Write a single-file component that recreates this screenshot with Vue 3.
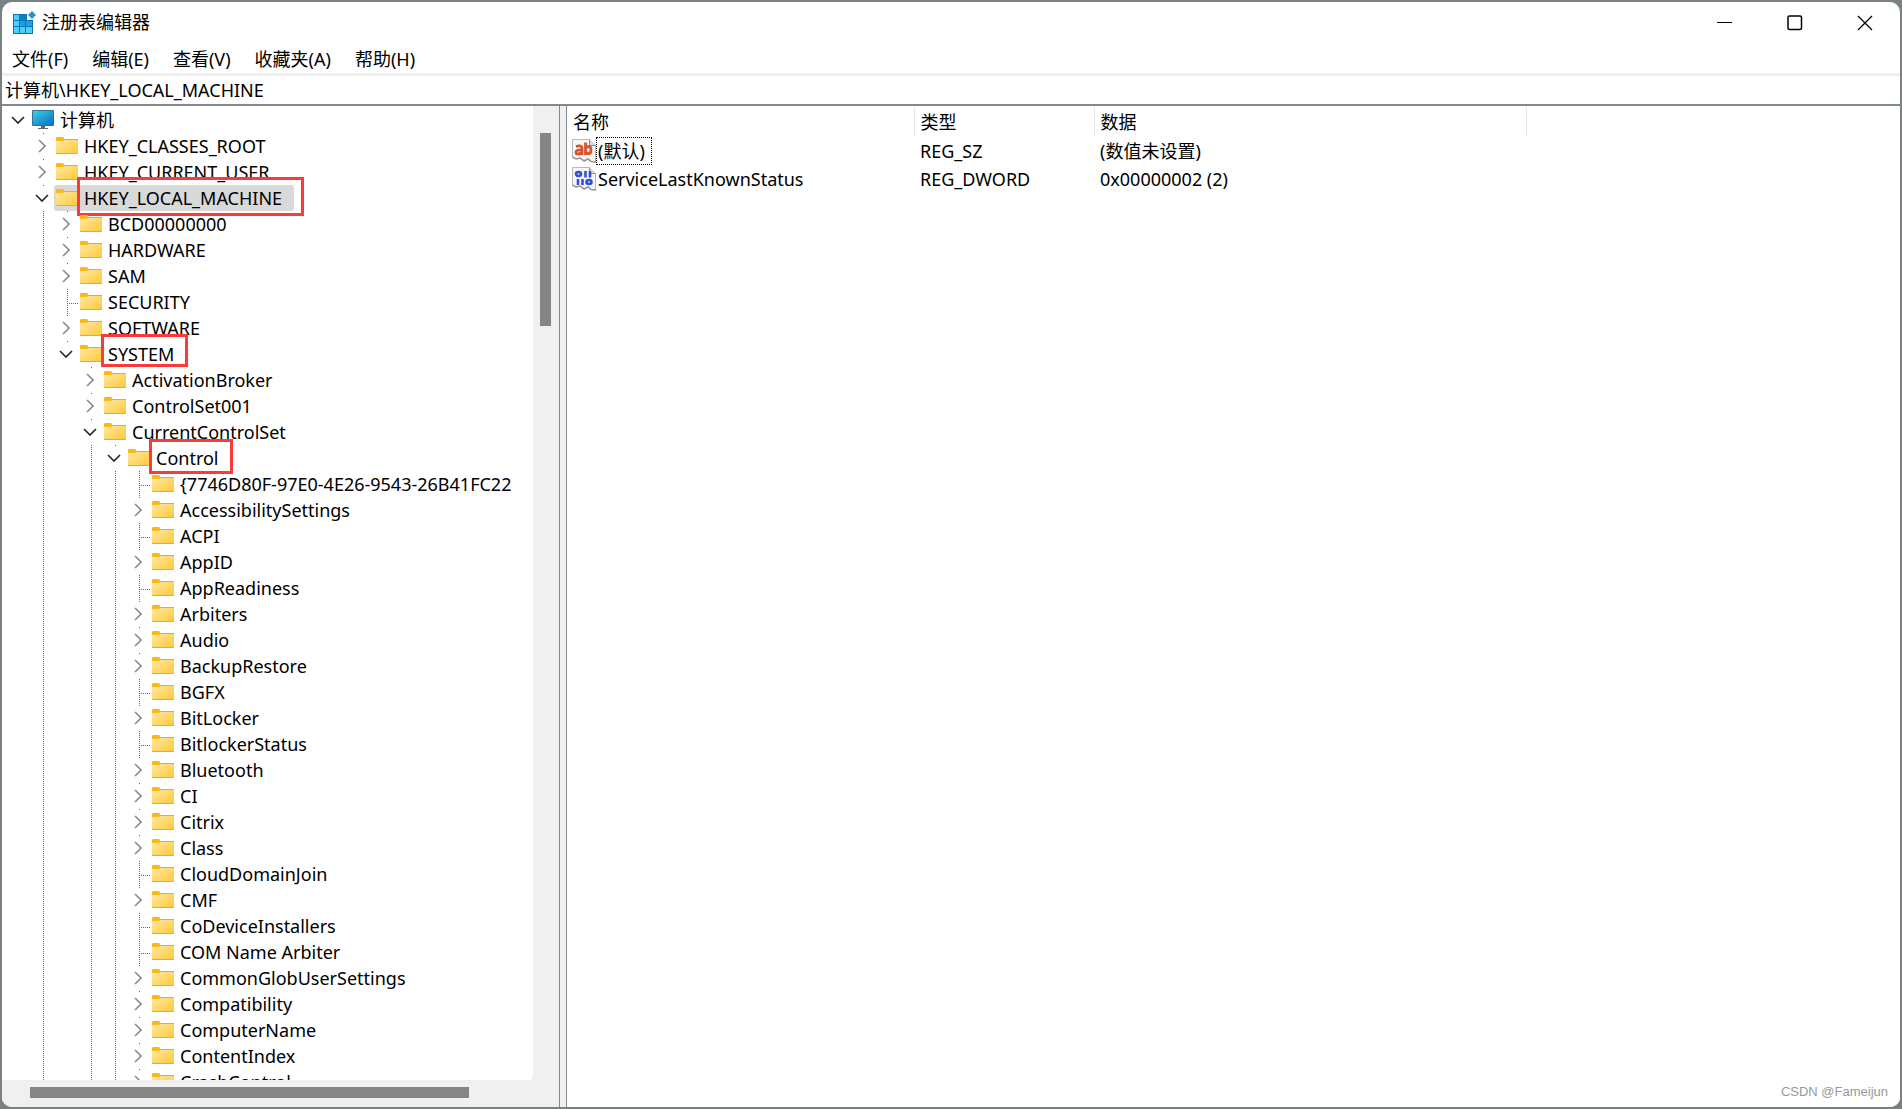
<script setup>
const keys = [
  { name: '计算机', level: 0, state: 'open', icon: 'computer' },
  { name: 'HKEY_CLASSES_ROOT', level: 1, state: 'closed' },
  { name: 'HKEY_CURRENT_USER', level: 1, state: 'closed' },
  { name: 'HKEY_LOCAL_MACHINE', level: 1, state: 'open', selected: true, mark: 'mark-hive' },
  { name: 'BCD00000000', level: 2, state: 'closed' },
  { name: 'HARDWARE', level: 2, state: 'closed' },
  { name: 'SAM', level: 2, state: 'closed' },
  { name: 'SECURITY', level: 2, state: 'leaf' },
  { name: 'SOFTWARE', level: 2, state: 'closed' },
  { name: 'SYSTEM', level: 2, state: 'open', mark: 'mark-system' },
  { name: 'ActivationBroker', level: 3, state: 'closed' },
  { name: 'ControlSet001', level: 3, state: 'closed' },
  { name: 'CurrentControlSet', level: 3, state: 'open' },
  { name: 'Control', level: 4, state: 'open', mark: 'mark-control' },
  { name: '{7746D80F-97E0-4E26-9543-26B41FC22', level: 5, state: 'leaf' },
  { name: 'AccessibilitySettings', level: 5, state: 'closed' },
  { name: 'ACPI', level: 5, state: 'leaf' },
  { name: 'AppID', level: 5, state: 'closed' },
  { name: 'AppReadiness', level: 5, state: 'leaf' },
  { name: 'Arbiters', level: 5, state: 'closed' },
  { name: 'Audio', level: 5, state: 'closed' },
  { name: 'BackupRestore', level: 5, state: 'closed' },
  { name: 'BGFX', level: 5, state: 'leaf' },
  { name: 'BitLocker', level: 5, state: 'closed' },
  { name: 'BitlockerStatus', level: 5, state: 'leaf' },
  { name: 'Bluetooth', level: 5, state: 'closed' },
  { name: 'CI', level: 5, state: 'closed' },
  { name: 'Citrix', level: 5, state: 'closed' },
  { name: 'Class', level: 5, state: 'closed' },
  { name: 'CloudDomainJoin', level: 5, state: 'leaf' },
  { name: 'CMF', level: 5, state: 'closed' },
  { name: 'CoDeviceInstallers', level: 5, state: 'leaf' },
  { name: 'COM Name Arbiter', level: 5, state: 'leaf' },
  { name: 'CommonGlobUserSettings', level: 5, state: 'closed' },
  { name: 'Compatibility', level: 5, state: 'closed' },
  { name: 'ComputerName', level: 5, state: 'closed' },
  { name: 'ContentIndex', level: 5, state: 'closed' },
  { name: 'CrashControl', level: 5, state: 'closed' },
]

// Ancestor levels that still have siblings further down keep a dotted guide.
const guideLevels = [1, 3, 4]
const guides = (key) =>
  Array.from({ length: key.level }, (_, n) => guideLevels.includes(n))

const menus = ['文件(F)', '编辑(E)', '查看(V)', '收藏夹(A)', '帮助(H)']
const values = [
  { name: '(默认)', type: 'REG_SZ', data: '(数值未设置)', kind: 'string', focused: true },
  { name: 'ServiceLastKnownStatus', type: 'REG_DWORD', data: '0x00000002 (2)', kind: 'binary' },
]
</script>

<template>
  <div class="desktop">
    <main class="window">
      <header class="titlebar">
        <svg class="app-icon" width="24" height="24" viewBox="0 0 24 24" aria-hidden="true">
          <path fill="#0a74b4" d="M0 3h14v6h6v14H0z" />
          <path fill="#4fd0fb" d="M1 4h5v5H1zM1 10h5v5H1zM1 16h5v6H1zM7 16h5v6H7zM13 16h6v6h-6z" />
          <path fill="#1ba4e4" d="M7 10h5v5H7zM13 10h6v5h-6z" />
          <path fill="#0b83c5" d="M7 4h6v5H7z" />
          <path fill="#2a93c9" d="M19 0l4 4-4 4-4-4z" />
        </svg>
        <h1>注册表编辑器</h1>
        <div class="controls">
          <button type="button" aria-label="最小化">
            <svg width="16" height="16" viewBox="0 0 16 16"><path d="M0 7.5h15" stroke-width="1" /></svg>
          </button>
          <button type="button" aria-label="最大化">
            <svg width="16" height="16" viewBox="0 0 16 16"><rect x="1" y="1" width="13.5" height="13.5" rx="1.5" stroke-width="1.5" /></svg>
          </button>
          <button type="button" aria-label="关闭">
            <svg width="16" height="16" viewBox="0 0 16 16"><path d="M1 1l14 14M15 1L1 15" stroke-width="1.3" /></svg>
          </button>
        </div>
      </header>

      <nav class="menubar">
        <button v-for="menu in menus" :key="menu" type="button">{{ menu }}</button>
      </nav>

      <input class="address" type="text" aria-label="地址" value="计算机\HKEY_LOCAL_MACHINE" />

      <div class="panes">
        <section class="tree-pane">
          <div class="tree-row">
            <div class="viewport">
              <ul class="tree">
                <li v-for="key in keys" :key="key.name" class="node">
                  <span v-for="(line, n) in guides(key)" :key="n" class="cell" :class="{ guide: line }"></span>
                  <span class="cell" :class="[key.state, { root: key.level === 0 }]">
                    <svg v-if="key.state === 'open'" width="14" height="8" viewBox="0 0 14 8"><path d="M1 1l6 6 6-6" stroke="#222" /></svg>
                    <svg v-else-if="key.state === 'closed'" width="8" height="14" viewBox="0 0 8 14"><path d="M1 1l6 6-6 6" stroke="#8c8c8c" /></svg>
                  </span>
                  <span class="item" :class="{ selected: key.selected }">
                    <svg v-if="key.icon" class="pic" width="22" height="20" viewBox="0 0 22 20">
                      <path d="M9 16h4v2h3v1H6v-1h3z" fill="#5d6b78" />
                      <rect width="22" height="16" rx="1" fill="#35708f" />
                      <rect x="1" y="1" width="20" height="14" fill="url(#screen)" />
                    </svg>
                    <svg v-else class="pic" width="22" height="18" viewBox="0 0 22 18">
                      <path d="M0 1q0-1 1-1h6l1 1v3H0z" fill="#fbb917" />
                      <path d="M0 4h7l2-2h13v15H0z" fill="url(#folder)" />
                      <path d="M8 2h14v1H8zM0 16h22v1H0z" fill="#efa92a" />
                    </svg>
                    <span class="label">{{ key.name }}</span>
                    <span v-if="key.mark" class="mark" :class="key.mark"></span>
                  </span>
                </li>
              </ul>
            </div>
            <div class="vscroll"><div class="thumb"></div></div>
          </div>
          <div class="hscroll"><div class="thumb"></div></div>
        </section>

        <section class="list-pane">
          <table>
            <colgroup><col class="c-name" /><col class="c-type" /><col class="c-data" /></colgroup>
            <thead>
              <tr><th>名称</th><th>类型</th><th>数据</th></tr>
            </thead>
            <tbody>
              <tr v-for="value in values" :key="value.name">
                <td>
                  <div class="value">
                    <svg width="24" height="24" viewBox="0 0 24 24" aria-hidden="true">
                      <path d="M.5.5h17l6 6v16.500l-4-.5-3-2.500-4 2-4-3-4 1-4-2z" fill="#f6f6f6" stroke="#b8b8b8" />
                      <path d="M17.500.5v6h6" fill="#ddd" stroke="#8e8e8e" />
                      <path d="M0 18l4 2 4-1 4 3 4-2 3 2.500 5 .5" fill="none" stroke="#999" stroke-width="1.500" />
                      <g v-if="value.kind === 'string'" fill="none" stroke="#d9532c" stroke-width="2.800">
                        <path d="M4 7.500q6-2 6 2V16M10 11q-6-.5-6 2.200 0 1.800 2.300 1.800 3 0 3.700-2.500" />
                        <path d="M13.500 3.500V16M13.500 10q1-2.500 3-2.500 2.500 0 2.500 3.700 0 3.500-2.500 3.500-2 0-3-2.200" />
                      </g>
                      <g v-else fill="none" stroke="#2f4fd6" stroke-width="2.600">
                        <ellipse cx="6.500" cy="7" rx="2.500" ry="2" />
                        <path d="M13.500 4v6.500M18 4v6.500M6 12v6M10.500 12v6" />
                        <ellipse cx="17" cy="15" rx="2.500" ry="2" />
                      </g>
                    </svg>
                    <span class="value-name" :class="{ focused: value.focused }">{{ value.name }}</span>
                  </div>
                </td>
                <td>{{ value.type }}</td>
                <td>{{ value.data }}</td>
              </tr>
            </tbody>
          </table>
          <p class="credit">CSDN @Fameijun</p>
        </section>
      </div>
    </main>

    <svg class="defs" width="0" height="0" aria-hidden="true">
      <defs>
        <linearGradient id="folder" x1="0" y1="0" x2="1" y2="1">
          <stop offset="0" stop-color="#ffe9a4" /><stop offset="1" stop-color="#ffc937" />
        </linearGradient>
        <linearGradient id="screen" x1="0" y1="0" x2="1" y2="1">
          <stop offset="0" stop-color="#37d3e3" /><stop offset="1" stop-color="#0c6cc4" />
        </linearGradient>
      </defs>
    </svg>
  </div>
</template>

<style>
body {
  background: #7b8080;
}
</style>

<style scoped>
* {
  box-sizing: border-box;
}
.desktop {
  height: 100vh;
  padding: 2px;
  background: #7b8080;
  color: #000;
  font: 18px/26px "Noto Sans", "Noto Sans CJK SC", sans-serif;
}
.window {
  display: flex;
  flex-direction: column;
  height: 100%;
  overflow: hidden;
  border-radius: 10px;
  background: #fff;
}
.titlebar {
  display: flex;
  align-items: center;
  height: 41px;
  padding-left: 11px;
}
h1 {
  margin: 0 0 0 5px;
  padding-bottom: 2px;
  font-size: 18px;
  font-weight: 400;
}
.controls {
  display: flex;
  margin-left: auto;
}
button {
  padding: 0;
  border: 0;
  background: none;
  color: inherit;
  font: inherit;
}
.controls button {
  display: flex;
  align-items: center;
  justify-content: center;
  width: 70px;
  height: 41px;
}
.controls svg {
  fill: none;
  stroke: #000;
}
.menubar {
  display: flex;
  gap: 24px;
  padding: 3px 10px 1px;
  border-bottom: 3px solid #efefef;
}
.address {
  height: 28px;
  padding: 0 3px 2px;
  border: 0;
  outline: 0;
  background: #fff;
  color: #000;
  font: inherit;
}
.panes {
  display: flex;
  flex: 1;
  min-height: 0;
  border-top: 2px solid #828790;
  background: #f0f0f0;
}
.tree-pane {
  display: flex;
  flex-direction: column;
  width: 558px;
  border-right: 1px solid #828790;
  background: #f0f0f0;
}
.tree-row {
  display: flex;
  flex: 1;
  min-height: 0;
}
.viewport {
  flex: 1;
  overflow: hidden;
  border-radius: 0 0 4px 0;
  background: #fff;
}
.tree {
  margin: 0;
  padding: 1px 0 0 4px;
  list-style: none;
}
.node {
  display: flex;
  height: 26px;
  white-space: nowrap;
}
.cell {
  display: flex;
  flex: none;
  align-items: center;
  justify-content: center;
  width: 24px;
  height: 26px;
}
.cell svg {
  fill: none;
  stroke-width: 1.6;
}
.guide {
  background: repeating-linear-gradient(#666 0 1px, transparent 1px 2px) 13px 0 / 1px 100% no-repeat;
}
.leaf {
  background:
    repeating-linear-gradient(#666 0 1px, transparent 1px 2px) 13px 0 / 1px 100% no-repeat,
    repeating-linear-gradient(90deg, #666 0 1px, transparent 1px 2px) 15px 14px / 9px 1px no-repeat;
}
.open:not(.root),
.closed {
  background: linear-gradient(#666, #666) 13px 0 / 1px 1px no-repeat;
}
.item {
  position: relative;
  display: flex;
  align-items: center;
  height: 26px;
  padding: 0 4px 0 2px;
  border-radius: 3px;
}
.selected {
  padding-right: 12px;
  background: #d9d9d9;
}
.pic {
  flex: none;
}
.label {
  margin-left: 6px;
}
.mark {
  position: absolute;
  left: 23px;
  border: 3px solid #fb3a3a;
}
.mark-hive {
  top: -8px;
  right: -10px;
  bottom: -5px;
}
.mark-system {
  top: -7px;
  right: -10px;
  bottom: 0;
}
.mark-control {
  top: -6px;
  right: -10px;
  bottom: -3px;
}
.vscroll {
  width: 26px;
  padding: 27px 8px 0 7px;
}
.vscroll .thumb {
  height: 193px;
  background: #858585;
}
.hscroll {
  height: 27px;
  padding: 7px 90px 9px 28px;
}
.hscroll .thumb {
  height: 11px;
  background: #858585;
}
.list-pane {
  display: flex;
  flex: 1;
  flex-direction: column;
  min-width: 0;
  margin-left: 6px;
  border-left: 1px solid #828790;
  background: #fff;
}
table {
  width: 960px;
  margin-top: 1px;
  border-collapse: collapse;
  table-layout: fixed;
}
.c-name {
  width: 347px;
}
.c-type {
  width: 180px;
}
th {
  height: 30px;
  padding: 0 6px;
  border-right: 1px solid #e5e5e5;
  font-weight: 400;
  text-align: left;
}
td {
  height: 28px;
  padding: 0 6px;
}
td:first-child {
  padding: 0 5px;
}
.value {
  display: flex;
  align-items: center;
}
.value-name {
  padding: 0 2px;
}
.focused {
  padding: 0 6px 0 1px;
  border: 1px dotted #000;
}
.credit {
  margin: auto 12px 5px auto;
  color: #999;
  font: 13px/20px "Liberation Sans", sans-serif;
}
.defs {
  position: absolute;
}
</style>
